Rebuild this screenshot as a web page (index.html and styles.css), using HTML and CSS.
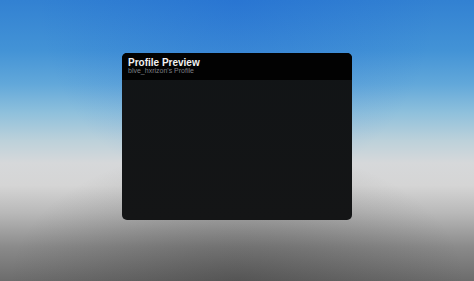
FILE: index.html
```html
<!DOCTYPE html>
<html>
<head>
<meta charset="utf-8">
<link rel="stylesheet" href="styles.css">
</head>
<body>
<div class="stage">
  <div class="card">
    <div class="card-header">
      <div class="title">Profile Preview</div>
      <div class="subtitle">blve_hxrizon's Profile</div>
    </div>
    <div class="card-body"></div>
  </div>
</div>
</body>
</html>
```
FILE: styles.css
```css
html, body {
  margin: 0;
  padding: 0;
  height: 100%;
}
body {
  font-family: "Liberation Sans", Arial, sans-serif;
  background:
    radial-gradient(ellipse 60% 100% at 50% 0%, rgba(20, 90, 210, 0.3), rgba(20, 90, 210, 0) 70%),
    radial-gradient(ellipse 60% 60% at 50% 100%, rgba(30, 30, 30, 0.3), rgba(30, 30, 30, 0) 80%),
    linear-gradient(to bottom,
      #3281d2 0%,
      #4393d6 18%,
      #62a8da 30%,
      #8ec0dc 40%,
      #bcd1da 50%,
      #d6d8da 58%,
      #d5d5d5 66%,
      #b8b8b8 76%,
      #8a8a8a 88%,
      #6c6c6c 100%);
}
.stage {
  height: 281px;
  display: flex;
  justify-content: center;
  align-items: flex-start;
  padding-top: 53px;
  box-sizing: border-box;
}
.card {
  width: 230px;
  height: 167px;
  border-radius: 5px;
  overflow: hidden;
  display: flex;
  flex-direction: column;
  background: linear-gradient(to bottom, #111416, #141516);
}
.card-header {
  background: #020202;
  height: 27px;
  padding: 4px 0 0 6px;
  box-sizing: border-box;
}
.title {
  color: #f2f2f2;
  font-weight: bold;
  font-size: 10px;
  line-height: 11px;
}
.subtitle {
  color: #7d7f82;
  font-size: 7px;
  line-height: 7px;
  margin-top: -1px;
}
.card-body {
  flex: 1;
}
```
